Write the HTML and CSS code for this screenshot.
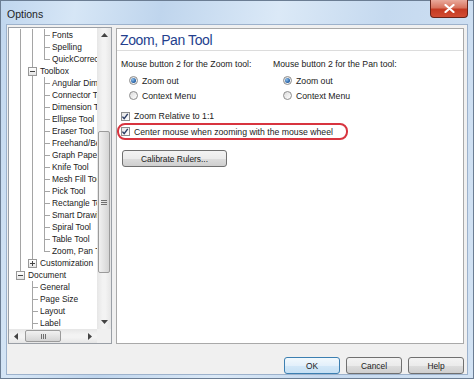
FILE: index.html
```html
<!DOCTYPE html>
<html lang="en">
<head>
  <meta charset="UTF-8">
  <title>Options</title>
  <link rel="stylesheet" href="styles.css">
</head>
<body>
  <div class="window">
    <div class="titlebar">
      <span class="title">Options</span>
      <button class="close">
        <svg width="11" height="9" viewBox="0 0 11 9"><path d="M1.5 1 L9.5 8 M9.5 1 L1.5 8" stroke="#fff" stroke-width="2.2" stroke-linecap="round"/></svg>
      </button>
    </div>

    <div class="client">
      <div class="main">
        <div class="tree">
          <div class="tree-view">
            <div class="row"><i class="g v"></i><i class="g v"></i><i class="g t"></i><span>Fonts</span></div>
            <div class="row"><i class="g v"></i><i class="g v"></i><i class="g t"></i><span>Spelling</span></div>
            <div class="row"><i class="g v"></i><i class="g v"></i><i class="g l"></i><span>QuickCorrect</span></div>
            <div class="row"><i class="g v"></i><i class="g v"><b class="exp"></b></i><span>Toolbox</span></div>
            <div class="row"><i class="g v"></i><i class="g v"></i><i class="g t"></i><span>Angular Dimension</span></div>
            <div class="row"><i class="g v"></i><i class="g v"></i><i class="g t"></i><span>Connector Tool</span></div>
            <div class="row"><i class="g v"></i><i class="g v"></i><i class="g t"></i><span>Dimension Tool</span></div>
            <div class="row"><i class="g v"></i><i class="g v"></i><i class="g t"></i><span>Ellipse Tool</span></div>
            <div class="row"><i class="g v"></i><i class="g v"></i><i class="g t"></i><span>Eraser Tool</span></div>
            <div class="row"><i class="g v"></i><i class="g v"></i><i class="g t"></i><span>Freehand/Bezier Tool</span></div>
            <div class="row"><i class="g v"></i><i class="g v"></i><i class="g t"></i><span>Graph Paper Tool</span></div>
            <div class="row"><i class="g v"></i><i class="g v"></i><i class="g t"></i><span>Knife Tool</span></div>
            <div class="row"><i class="g v"></i><i class="g v"></i><i class="g t"></i><span>Mesh Fill Tool</span></div>
            <div class="row"><i class="g v"></i><i class="g v"></i><i class="g t"></i><span>Pick Tool</span></div>
            <div class="row"><i class="g v"></i><i class="g v"></i><i class="g t"></i><span>Rectangle Tool</span></div>
            <div class="row"><i class="g v"></i><i class="g v"></i><i class="g t"></i><span>Smart Drawing Tool</span></div>
            <div class="row"><i class="g v"></i><i class="g v"></i><i class="g t"></i><span>Spiral Tool</span></div>
            <div class="row"><i class="g v"></i><i class="g v"></i><i class="g t"></i><span>Table Tool</span></div>
            <div class="row"><i class="g v"></i><i class="g v"></i><i class="g l"></i><span>Zoom, Pan Tool</span></div>
            <div class="row"><i class="g v"></i><i class="g up"><b class="exp plus"></b></i><span>Customization</span></div>
            <div class="row"><i class="g up"><b class="exp"></b></i><span>Document</span></div>
            <div class="row"><i class="g"></i><i class="g t"></i><span>General</span></div>
            <div class="row"><i class="g"></i><i class="g t"></i><span>Page Size</span></div>
            <div class="row"><i class="g"></i><i class="g t"></i><span>Layout</span></div>
            <div class="row"><i class="g"></i><i class="g t"></i><span>Label</span></div>
          </div>

          <div class="vscroll">
            <div class="sb-btn"><svg width="7" height="4"><polygon points="0,4 3.5,0 7,4" fill="#444"/></svg></div>
            <div class="sb-track"><div class="thumb v-thumb"><span class="grip"></span></div></div>
            <div class="sb-btn"><svg width="7" height="4"><polygon points="0,0 7,0 3.5,4" fill="#444"/></svg></div>
          </div>
          <div class="hscroll">
            <div class="sb-btn"><svg width="4" height="7"><polygon points="4,0 4,7 0,3.5" fill="#444"/></svg></div>
            <div class="sb-track"><div class="thumb h-thumb"><span class="grip"></span></div></div>
            <div class="sb-btn"><svg width="4" height="7"><polygon points="0,0 4,3.5 0,7" fill="#444"/></svg></div>
          </div>
          <div class="corner"></div>
        </div>

        <div class="page">
          <div class="page-title">Zoom, Pan Tool</div>
          <div class="page-body">
            <div class="groups">
              <div class="group">
                <div class="label">Mouse button 2 for the Zoom tool:</div>
                <div class="radio"><i class="dot on"></i>Zoom out</div>
                <div class="radio"><i class="dot"></i>Context Menu</div>
              </div>
              <div class="group">
                <div class="label">Mouse button 2 for the Pan tool:</div>
                <div class="radio"><i class="dot on"></i>Zoom out</div>
                <div class="radio"><i class="dot"></i>Context Menu</div>
              </div>
            </div>

            <div class="check first">
              <i class="box"><svg width="9" height="9" viewBox="0 0 9 9"><path d="M1.6 4.6 L3.6 7 L7.6 1.6" fill="none" stroke="#2a3c64" stroke-width="1.6"/></svg></i>
              Zoom Relative to 1:1
            </div>
            <div class="check marked">
              <i class="box"><svg width="9" height="9" viewBox="0 0 9 9"><path d="M1.6 4.6 L3.6 7 L7.6 1.6" fill="none" stroke="#2a3c64" stroke-width="1.6"/></svg></i>
              Center mouse when zooming with the mouse wheel
            </div>

            <button class="btn calibrate">Calibrate Rulers...</button>
          </div>
        </div>
      </div>

      <div class="footer">
        <button class="btn default">OK</button>
        <button class="btn">Cancel</button>
        <button class="btn">Help</button>
      </div>
    </div>
  </div>
</body>
</html>
```

FILE: styles.css
```css
body {
  margin: 0;
  font-family: "Liberation Sans", Arial, sans-serif;
  font-size: 8.7px;
  color: #1b1b1b;
  overflow: hidden;
}

.window {
  width: 474px;
  height: 379px;
  box-sizing: border-box;
  border: 1px solid #6b7d93;
  padding-bottom: 3px;
  background: linear-gradient(100deg, #c0d6ee 0%, #d6e6f6 14%, #bfd5ed 30%, #dbe9f7 52%, #c5d9ef 72%, #d3e3f4 100%);
  display: flex;
  flex-direction: column;
}

.titlebar {
  height: 23px;
  display: flex;
  justify-content: space-between;
  align-items: flex-start;
  padding: 0 5px 0 6px;
}

.title {
  font-size: 10.5px;
  color: #1e1e1e;
  margin-top: 7px;
}

.close {
  width: 38px;
  height: 18px;
  margin-top: -1px;
  padding: 0;
  border: 1px solid #6a2318;
  border-top: none;
  border-radius: 0 0 4px 4px;
  background: linear-gradient(#e9a99b 0%, #d8745f 45%, #c43a22 55%, #d24c33 100%);
  display: flex;
  align-items: center;
  justify-content: center;
}

.client {
  flex: 1;
  margin: 0 5px;
  border: 1px solid #9db2cc;
  background: #f0f0f0;
  display: flex;
  flex-direction: column;
}

.main {
  height: 319px;
  padding: 2px 3px 0 1px;
  display: flex;
  gap: 4px;
  align-items: flex-start;
}

/* tree */

.tree {
  width: 104px;
  height: 317px;
  box-sizing: border-box;
  border: 1px solid #9a9fa6;
  background: #fff;
  display: grid;
  grid-template-columns: 88px 14px;
  grid-template-rows: 301px 14px;
}

.tree-view {
  overflow: hidden;
  padding-top: 1px;
  font-size: 8.4px;
  color: #222;
}

.row {
  height: 12px;
  display: flex;
  align-items: center;
  padding-left: 5px;
  white-space: nowrap;
}

.row span {
  margin-left: 2px;
}

.g {
  width: 12px;
  height: 12px;
  flex: none;
  position: relative;
  display: flex;
  align-items: center;
  justify-content: center;
}

.g.v::before,
.g.t::before,
.g.l::before,
.g.up::before {
  content: "";
  position: absolute;
  left: 6px;
  top: 0;
  bottom: 0;
  border-left: 1px solid #a5a5a5;
}

.g.l::before,
.g.up::before {
  bottom: 6px;
}

.g.t::after,
.g.l::after {
  content: "";
  position: absolute;
  left: 6px;
  top: 6px;
  width: 6px;
  border-top: 1px solid #a5a5a5;
}

.exp {
  width: 9px;
  height: 9px;
  box-sizing: border-box;
  border: 1px solid #989898;
  background: linear-gradient(#ffffff, #e4e4e4);
  position: relative;
  z-index: 1;
  margin-left: 1px;
}

.exp::before {
  content: "";
  position: absolute;
  left: 1px;
  right: 1px;
  top: 3px;
  border-top: 1px solid #444;
}

.exp.plus::after {
  content: "";
  position: absolute;
  top: 1px;
  bottom: 1px;
  left: 3px;
  border-left: 1px solid #444;
}

.vscroll,
.hscroll {
  display: flex;
  background: linear-gradient(90deg, #e6e6e6, #f3f3f3 40%, #f3f3f3 60%, #e6e6e6);
}

.vscroll {
  flex-direction: column;
}

.hscroll {
  background: linear-gradient(#e6e6e6, #f3f3f3 40%, #f3f3f3 60%, #e6e6e6);
}

.sb-btn {
  width: 14px;
  height: 14px;
  flex: none;
  display: flex;
  align-items: center;
  justify-content: center;
}

.sb-track {
  flex: 1;
  display: flex;
}

.vscroll .sb-track {
  flex-direction: column;
}

.thumb {
  box-sizing: border-box;
  border: 1px solid #9b9b9b;
  border-radius: 2px;
  display: flex;
  align-items: center;
  justify-content: center;
}

.v-thumb {
  margin: 89px 1px 0;
  height: 142px;
  background: linear-gradient(90deg, #f1f1f1, #e3e3e3 50%, #d4d4d4);
}

.h-thumb {
  margin: 1px 0 1px 2px;
  width: 36px;
  background: linear-gradient(#f1f1f1, #e3e3e3 50%, #d4d4d4);
}

.v-thumb .grip {
  width: 6px;
  height: 5px;
  background: repeating-linear-gradient(#6f6f6f 0 1px, transparent 1px 2px);
}

.h-thumb .grip {
  width: 5px;
  height: 5px;
  background: repeating-linear-gradient(90deg, #6f6f6f 0 1px, transparent 1px 2px);
}

.corner {
  background: #f0f0f0;
}

/* page */

.page {
  width: 348px;
  height: 316px;
  margin-top: 1px;
  box-sizing: border-box;
  border: 1px solid #a9a9a9;
  background: #fff;
}

.page-title {
  height: 21px;
  border-bottom: 1px solid #dcdcdc;
  padding-left: 3px;
  font-size: 14px;
  letter-spacing: -0.4px;
  line-height: 22px;
  color: #243f8e;
}

.page-body {
  padding: 7px 0 0 4px;
}

.groups {
  display: flex;
}

.group {
  width: 152px;
}

.label {
  height: 12px;
  line-height: 12px;
  margin-bottom: 3px;
}

.radio {
  height: 15px;
  display: flex;
  align-items: center;
  padding-left: 8px;
}

.group + .group .radio {
  padding-left: 10px;
}

.dot {
  width: 9px;
  height: 9px;
  box-sizing: border-box;
  border: 1px solid #8c8c8c;
  border-radius: 50%;
  background: linear-gradient(135deg, #dcdcdc, #ffffff);
  margin-right: 4px;
  display: flex;
  align-items: center;
  justify-content: center;
}

.dot.on::after {
  content: "";
  width: 5px;
  height: 5px;
  border-radius: 50%;
  background: radial-gradient(circle at 35% 35%, #8fc0ec, #1f5aa0 70%);
}

.check {
  display: flex;
  align-items: center;
  height: 12px;
}

.check.first {
  margin-top: 7px;
}

.box {
  width: 9px;
  height: 9px;
  box-sizing: border-box;
  border: 1px solid #8e8f8f;
  background: linear-gradient(135deg, #e6e6e6, #ffffff);
  margin-right: 4px;
  display: flex;
}

.box svg {
  margin: -1px 0 0 -1px;
}

.check.marked {
  width: fit-content;
  height: 13px;
  margin: 1px 0 0 -4px;
  padding: 0 13px 0 2px;
  border: 2px solid #d8343f;
  border-radius: 8px;
}

.btn {
  font-family: "Liberation Sans", Arial, sans-serif;
  font-size: 8.4px;
  color: #1b1b1b;
  height: 17px;
  padding: 0;
  border: 1px solid #707070;
  border-radius: 3px;
  background: linear-gradient(#f3f3f3 0%, #ebebeb 50%, #dddddd 51%, #cfcfcf 100%);
}

.calibrate {
  display: block;
  width: 105px;
  margin: 10px 0 0 1px;
}

.footer {
  flex: 1;
  display: flex;
  justify-content: flex-end;
  align-items: flex-start;
  gap: 6px;
  padding: 11px 3px 0 0;
}

.footer .btn {
  width: 56px;
}

.btn.default {
  border-color: #3c7fb1;
  background: linear-gradient(#f2f9fd 0%, #e3f0fb 50%, #d3e8f8 51%, #c6e0f4 100%);
}
```
